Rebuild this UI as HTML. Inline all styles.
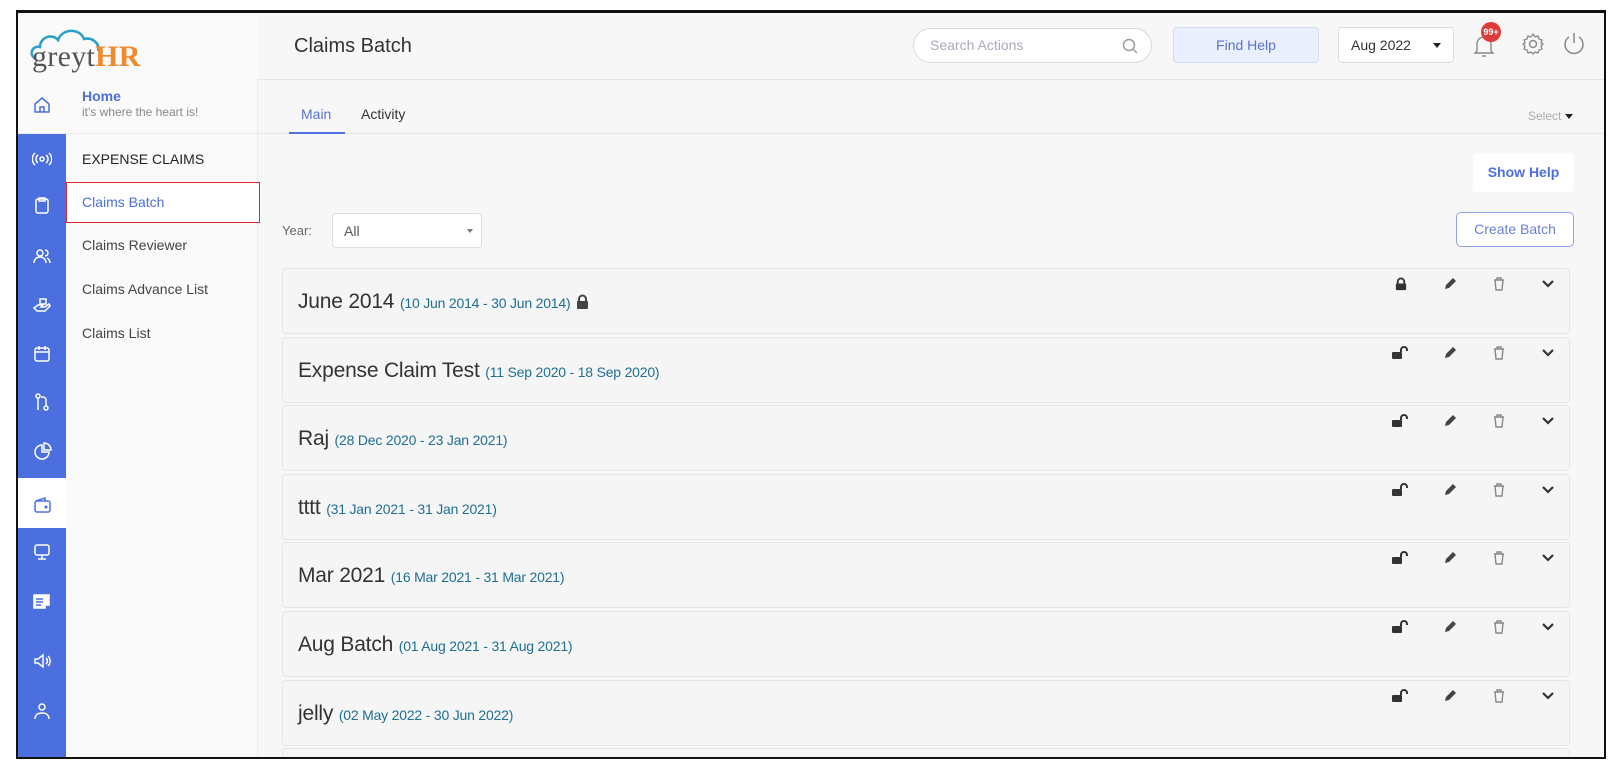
<!DOCTYPE html>
<html><head><meta charset="utf-8"><style>
*{box-sizing:border-box;margin:0;padding:0}
body{width:1612px;height:776px;background:#fff;font-family:"Liberation Sans",sans-serif;position:relative;overflow:hidden}
.frame{position:absolute;left:16px;top:10px;width:1590px;height:749px;border:2px solid #111;border-top-width:3px;background:#f7f7f7;overflow:hidden}
.a{position:absolute}
.ic{position:absolute;left:0;width:48px;text-align:center}
.ic svg{width:20px;height:20px;stroke:#fff;fill:none;stroke-width:1.5}
.nav{position:absolute;left:64px;font-size:14px;color:#444}
.card{position:absolute;left:264px;width:1288px;height:66px;border:1px solid #e6e6e6;border-radius:4px;background:#f5f5f5}
.card .t{position:absolute;left:15px;top:21px;font-size:21px;color:#333;letter-spacing:-0.2px}
.card .t span{font-size:14px;color:#1f6f93}
.card svg{position:absolute;top:8px}
</style></head><body>
<div class="frame">
 <div class="a" style="left:0;top:0;width:240px;height:746px;background:#fafafa"></div>
 <div class="a" style="left:0;top:121px;width:48px;height:625px;background:#4c6fe0"></div>
 <div class="a" style="left:0;top:465px;width:48px;height:50px;background:#fff"></div>
 <div class="a" style="left:239px;top:66px;width:1px;height:680px;background:#ececec"></div>
 <div class="a" style="left:0;top:120px;width:240px;height:1px;background:#ececec"></div>
 <svg class="a" style="left:10px;top:6px" width="120" height="60"><path d="M8 40 C0 36 4 26 12 28 C12 18 24 14 30 21 C34 9 52 9 56 20 C64 18 72 24 70 32" fill="none" stroke="#2aa0c6" stroke-width="2.5"/></svg>
 <div class="a" style="left:14px;top:27px;font-size:30px;font-family:'Liberation Serif',serif;color:#555;letter-spacing:0.3px">greyt<b style="color:#f08a2c">HR</b></div>
 <div class="a" style="left:240px;top:66px;width:1350px;height:1px;background:#e6e6e6"></div>
 <div class="a" style="left:276px;top:22px;font-size:20px;color:#333">Claims Batch</div>
 <div class="a" style="left:895px;top:15px;width:239px;height:35px;border:1px solid #d8d8d8;border-radius:18px;background:#fff"><span class="a" style="left:16px;top:8px;font-size:14px;color:#aab">Search Actions</span><svg class="a" style="right:12px;top:8px" width="18" height="18"><circle cx="8" cy="8" r="5.5" stroke="#999" stroke-width="1.4" fill="none"/><path d="M12 12l4 4" stroke="#999" stroke-width="1.4"/></svg></div>
 <div class="a" style="left:1155px;top:14px;width:146px;height:36px;border:1px solid #d5ddf5;border-radius:4px;background:#e9effd;color:#5a72d6;font-size:14px;text-align:center;line-height:34px">Find Help</div>
 <div class="a" style="left:1320px;top:14px;width:116px;height:36px;border:1px solid #ddd;border-radius:4px;background:#fff;font-size:14px;color:#333;line-height:34px;padding-left:12px">Aug 2022<span class="a" style="right:12px;top:15px;border:4px solid transparent;border-top:5px solid #222"></span></div>
 <svg class="a" style="left:1454px;top:18px" width="24" height="28"><path d="M5 20V13a7 7 0 0 1 14 0v7l2 2H3z" fill="none" stroke="#888" stroke-width="1.4"/><path d="M10 25h4" stroke="#888" stroke-width="1.4"/></svg>
 <div class="a" style="left:1463px;top:9px;width:20px;height:20px;border-radius:50%;background:#e03b3b;color:#fff;font-size:9px;font-weight:bold;text-align:center;line-height:20px">99+</div>
 <svg class="a" style="left:1503px;top:19px" width="24" height="24"><circle cx="12" cy="12" r="3.5" fill="none" stroke="#888" stroke-width="1.4"/><path d="M12 2l2 3 3-1 1 3 3 1-1 3 2 1-2 2 1 3-3 1-1 3-3-1-2 2-2-2-3 1-1-3-3-1 1-3-2-2 2-1-1-3 3-1 1-3 3 1z" fill="none" stroke="#888" stroke-width="1.3"/></svg>
 <svg class="a" style="left:1543px;top:18px" width="26" height="26"><path d="M8 6a9 9 0 1 0 10 0" fill="none" stroke="#888" stroke-width="1.5"/><path d="M13 2v10" stroke="#888" stroke-width="1.5"/></svg>
 <div class="a" style="left:240px;top:120px;width:1350px;height:1px;background:#e8e8e8"></div>
 <div class="a" style="left:283px;top:93px;font-size:14px;color:#5a72d6">Main</div>
 <div class="a" style="left:271px;top:119px;width:56px;height:2px;background:#4c6fe0"></div>
 <div class="a" style="left:343px;top:93px;font-size:14px;color:#333">Activity</div>
 <div class="a" style="left:1510px;top:96px;font-size:12px;color:#aaa">Select <span style="display:inline-block;border:4px solid transparent;border-top:5px solid #222;vertical-align:-3px"></span></div>
 <svg class="a" style="left:14px;top:82px" width="20" height="20"><path d="M3 9l7-6 7 6v8H3z M8 17v-5h4v5" fill="none" stroke="#4c6fe0" stroke-width="1.5"/></svg>
 <div class="a" style="left:64px;top:75px;font-size:14px;font-weight:bold;color:#4c6fe0">Home</div>
 <div class="a" style="left:64px;top:92px;font-size:12px;color:#888">it's where the heart is!</div>
 <div class="nav" style="top:138px;color:#222">EXPENSE CLAIMS</div>
 <div class="a" style="left:48px;top:169px;width:194px;height:41px;border:1.5px solid #d9282f;background:#fff"></div>
 <div class="nav" style="top:181px;color:#4c6fe0">Claims Batch</div>
 <div class="nav" style="top:224px">Claims Reviewer</div>
 <div class="nav" style="top:268px">Claims Advance List</div>
 <div class="nav" style="top:312px">Claims List</div>
 <div class="ic" style="top:136px"><svg viewBox="0 0 20 20"><circle cx="10" cy="10" r="2"/><path d="M6 6a5 5 0 0 0 0 8M14 6a5 5 0 0 1 0 8M3 4a8 8 0 0 0 0 12M17 4a8 8 0 0 1 0 12"/></svg></div>
 <div class="ic" style="top:182px"><svg viewBox="0 0 20 20"><rect x="4" y="4" width="12" height="14" rx="2"/><path d="M7 3h6v3H7z"/></svg></div>
 <div class="ic" style="top:233px"><svg viewBox="0 0 20 20"><circle cx="8" cy="7" r="3"/><path d="M2 17c0-4 3-6 6-6s6 2 6 6M13 4a3 3 0 0 1 0 6M15 12c2 1 3 3 3 5"/></svg></div>
 <div class="ic" style="top:282px"><svg viewBox="0 0 20 20"><path d="M2 13l4-3h5l-2 2h4l4-3 1 2-5 5H5zM8 4h6v5H8z"/></svg></div>
 <div class="ic" style="top:331px"><svg viewBox="0 0 20 20"><rect x="3" y="4" width="14" height="13" rx="2"/><path d="M3 8h14M7 2v4M13 2v4"/></svg></div>
 <div class="ic" style="top:379px"><svg viewBox="0 0 20 20"><circle cx="6" cy="4" r="2"/><circle cx="14" cy="16" r="2"/><path d="M6 6v12M14 14V8a3 3 0 0 0-3-3H9"/></svg></div>
 <div class="ic" style="top:429px"><svg viewBox="0 0 20 20"><path d="M10 3a7 7 0 1 0 7 7h-7z M12 1v7h7a7 7 0 0 0-7-7z"/></svg></div>
 <div class="ic" style="top:482px"><svg viewBox="0 0 20 20" style="stroke:#4c6fe0"><rect x="3" y="6" width="15" height="11" rx="2"/><path d="M4 6l9-3v3"/><circle cx="14" cy="12" r=".8"/></svg></div>
 <div class="ic" style="top:529px"><svg viewBox="0 0 20 20"><rect x="3" y="3" width="14" height="10" rx="2"/><path d="M10 13v4M6 17h8"/></svg></div>
 <div class="ic" style="top:578px"><svg viewBox="0 0 20 20" style="fill:#fff"><rect x="2" y="4" width="11" height="13"/><rect x="14" y="4" width="3" height="10"/><path d="M4 8h7M4 11h7M4 14h5" stroke="#4c6fe0"/></svg></div>
 <div class="ic" style="top:638px"><svg viewBox="0 0 20 20"><path d="M3 8h3l5-4v12l-5-4H3z M14 7a4 4 0 0 1 0 6M16 5a7 7 0 0 1 0 10"/></svg></div>
 <div class="ic" style="top:688px"><svg viewBox="0 0 20 20"><circle cx="10" cy="6" r="3"/><path d="M3 18c0-4 3-6 7-6s7 2 7 6"/></svg></div>
 <div class="a" style="left:1455px;top:140px;width:101px;height:39px;background:#fff;border-radius:4px;color:#4c6fe0;font-size:14px;font-weight:bold;text-align:center;line-height:39px">Show Help</div>
 <div class="a" style="left:1438px;top:199px;width:118px;height:35px;border:1px solid #8fa0e6;border-radius:5px;background:#fff;color:#6a7fd8;font-size:14px;text-align:center;line-height:33px">Create Batch</div>
 <div class="a" style="left:264px;top:210px;font-size:13px;color:#666">Year:</div>
 <div class="a" style="left:314px;top:200px;width:150px;height:35px;border:1px solid #ddd;border-radius:4px;background:#fff;font-size:14px;color:#555;padding:9px 11px">All<span class="a" style="right:8px;top:15px;border:3.5px solid transparent;border-top:4px solid #777"></span></div>
 <div id="cards"></div>
 <div class="card" style="top:255px"><div class="t">June 2014 <span>(10 Jun 2014 - 30 Jun 2014)</span> <svg style="position:static;vertical-align:-1px" width="13" height="15" viewBox="0 0 13 15"><path d="M3 7V5a3.5 3.5 0 0 1 7 0v2" stroke="#444" stroke-width="2" fill="none"/><rect x="1" y="7" width="11" height="8" rx="1" fill="#444"/></svg></div>
  <svg style="left:1111px" width="14" height="14" viewBox="0 0 13 15"><path d="M3 7V5a3.5 3.5 0 0 1 7 0v2" stroke="#333" stroke-width="2" fill="none"/><rect x="1" y="7" width="11" height="7" rx="1" fill="#333"/></svg>
  <svg style="left:1160px" width="14" height="14"><path d="M2 12l1-4 7-7 3 3-7 7z" fill="#444"/></svg>
  <svg style="left:1210px" width="12" height="14"><path d="M1 3h10M4 3V1h4v2M2 3l1 10h6l1-10" fill="none" stroke="#888" stroke-width="1.4"/></svg>
  <svg style="left:1258px" width="14" height="14"><path d="M2 4l5 5 5-5" fill="none" stroke="#333" stroke-width="2.2"/></svg>
 </div>
</div>
<script>
var d=[["Expense Claim Test","(11 Sep 2020 - 18 Sep 2020)"],["Raj","(28 Dec 2020 - 23 Jan 2021)"],["tttt","(31 Jan 2021 - 31 Jan 2021)"],["Mar 2021","(16 Mar 2021 - 31 Mar 2021)"],["Aug Batch","(01 Aug 2021 - 31 Aug 2021)"],["jelly","(02 May 2022 - 30 Jun 2022)"],["",""]];
var h='';
d.forEach(function(r,i){var top=255+68.6*(i+1);h+='<div class="card" style="top:'+top+'px"><div class="t">'+r[0]+' <span>'+r[1]+'</span></div>'+(r[0]?'<svg style="left:1109px" width="16" height="14" viewBox="0 0 16 14"><path d="M9 6V4a3 3 0 0 1 6 0v1" stroke="#333" stroke-width="2" fill="none"/><rect x="0" y="6" width="10" height="7" rx="1" fill="#333"/></svg><svg style="left:1160px" width="14" height="14"><path d="M2 12l1-4 7-7 3 3-7 7z" fill="#444"/></svg><svg style="left:1210px" width="12" height="14"><path d="M1 3h10M4 3V1h4v2M2 3l1 10h6l1-10" fill="none" stroke="#888" stroke-width="1.4"/></svg><svg style="left:1258px" width="14" height="14"><path d="M2 4l5 5 5-5" fill="none" stroke="#333" stroke-width="2.2"/></svg>':'')+'</div>';});
document.getElementById('cards').outerHTML=h;
</script>
</body></html>
